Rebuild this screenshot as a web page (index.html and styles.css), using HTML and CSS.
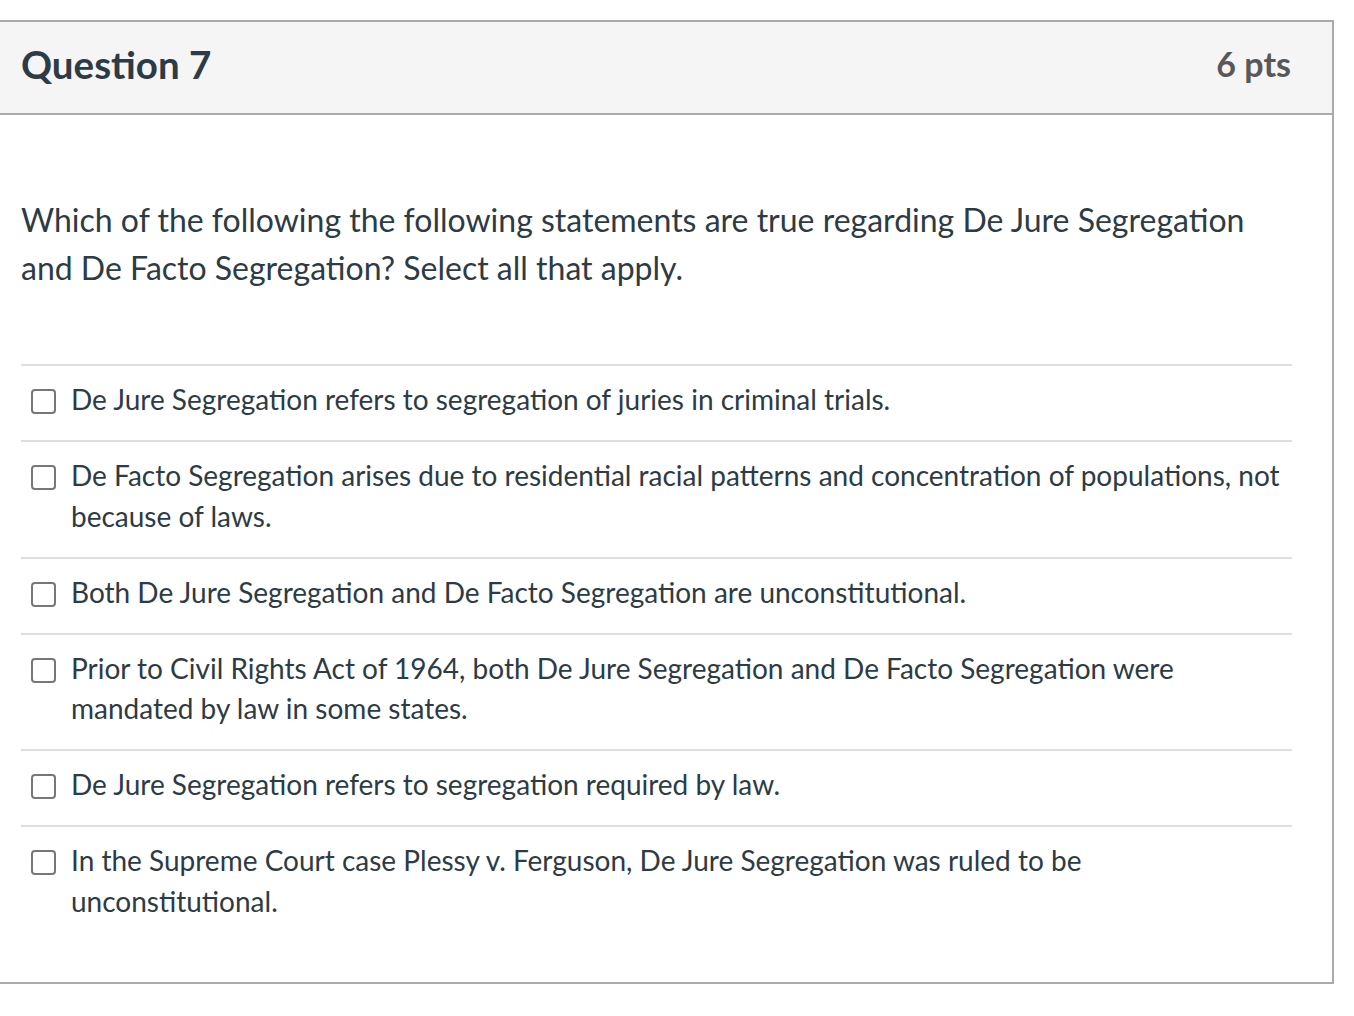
FILE: index.html
```html
<!DOCTYPE html>
<html lang="en">
<head>
<meta charset="utf-8">
<title>Question 7</title>
<link rel="stylesheet" href="styles.css">
</head>
<body>
<div class="card">
  <div class="card-header">
    <h2 class="q-title">Question 7</h2>
    <span class="q-points">6 pts</span>
  </div>
  <div class="card-body">
    <p class="q-text">Which of the following the following statements are true regarding De Jure Segregation and De Facto Segregation? Select all that apply.</p>
    <ul class="answers">
      <li class="answer"><span class="box"></span><span class="label">De Jure Segregation refers to segregation of juries in criminal trials.</span></li>
      <li class="answer"><span class="box"></span><span class="label">De Facto Segregation arises due to residential racial patterns and concentration of populations, not because of laws.</span></li>
      <li class="answer"><span class="box"></span><span class="label">Both De Jure Segregation and De Facto Segregation are unconstitutional.</span></li>
      <li class="answer"><span class="box"></span><span class="label">Prior to Civil Rights Act of 1964, both De Jure Segregation and De Facto Segregation were mandated by law in some states.</span></li>
      <li class="answer"><span class="box"></span><span class="label">De Jure Segregation refers to segregation required by law.</span></li>
      <li class="answer"><span class="box"></span><span class="label">In the Supreme Court case Plessy v. Ferguson, De Jure Segregation was ruled to be unconstitutional.</span></li>
    </ul>
  </div>
</div>
</body>
</html>
```

FILE: styles.css
```css
* { box-sizing: border-box; }
html, body { margin: 0; padding: 0; background: #fff; }
body {
  font-family: Lato, "Noto Sans", sans-serif;
  color: #2d3b45;
}
.card {
  margin: 20px 0 0 -2px;
  width: 1336px;
  border: 2px solid #ababab;
}
.card-header {
  height: 93px;
  background: #f5f5f5;
  border-bottom: 2px solid #ababab;
  display: flex;
  align-items: center;
  justify-content: space-between;
  padding: 0 41px 6px 21px;
}
.q-title {
  margin: 0;
  font-size: 38.5px;
  line-height: 1.2;
  font-weight: 700;
  color: #2d3b45;
}
.q-points {
  font-size: 34px;
  line-height: 1.2;
  font-weight: 700;
  color: #585858;
}
.card-body {
  padding: 81px 40px 40px 21px;
}
.q-text {
  margin: 0 0 72px;
  font-size: 32px;
  line-height: 48px;
}
.answers {
  list-style: none;
  margin: 0;
  padding: 0;
}
.answer {
  display: flex;
  align-items: flex-start;
  gap: 15px;
  border-top: 2px solid #dedede;
  padding: 13px 0 20.5px 10px;
  font-size: 28px;
  line-height: 40.5px;
}
.box {
  flex: none;
  width: 25px;
  height: 25px;
  margin-top: 10px;
  border: 2px solid #777;
  border-radius: 4px;
  background: #fff;
}
.label { flex: 1; }
```
